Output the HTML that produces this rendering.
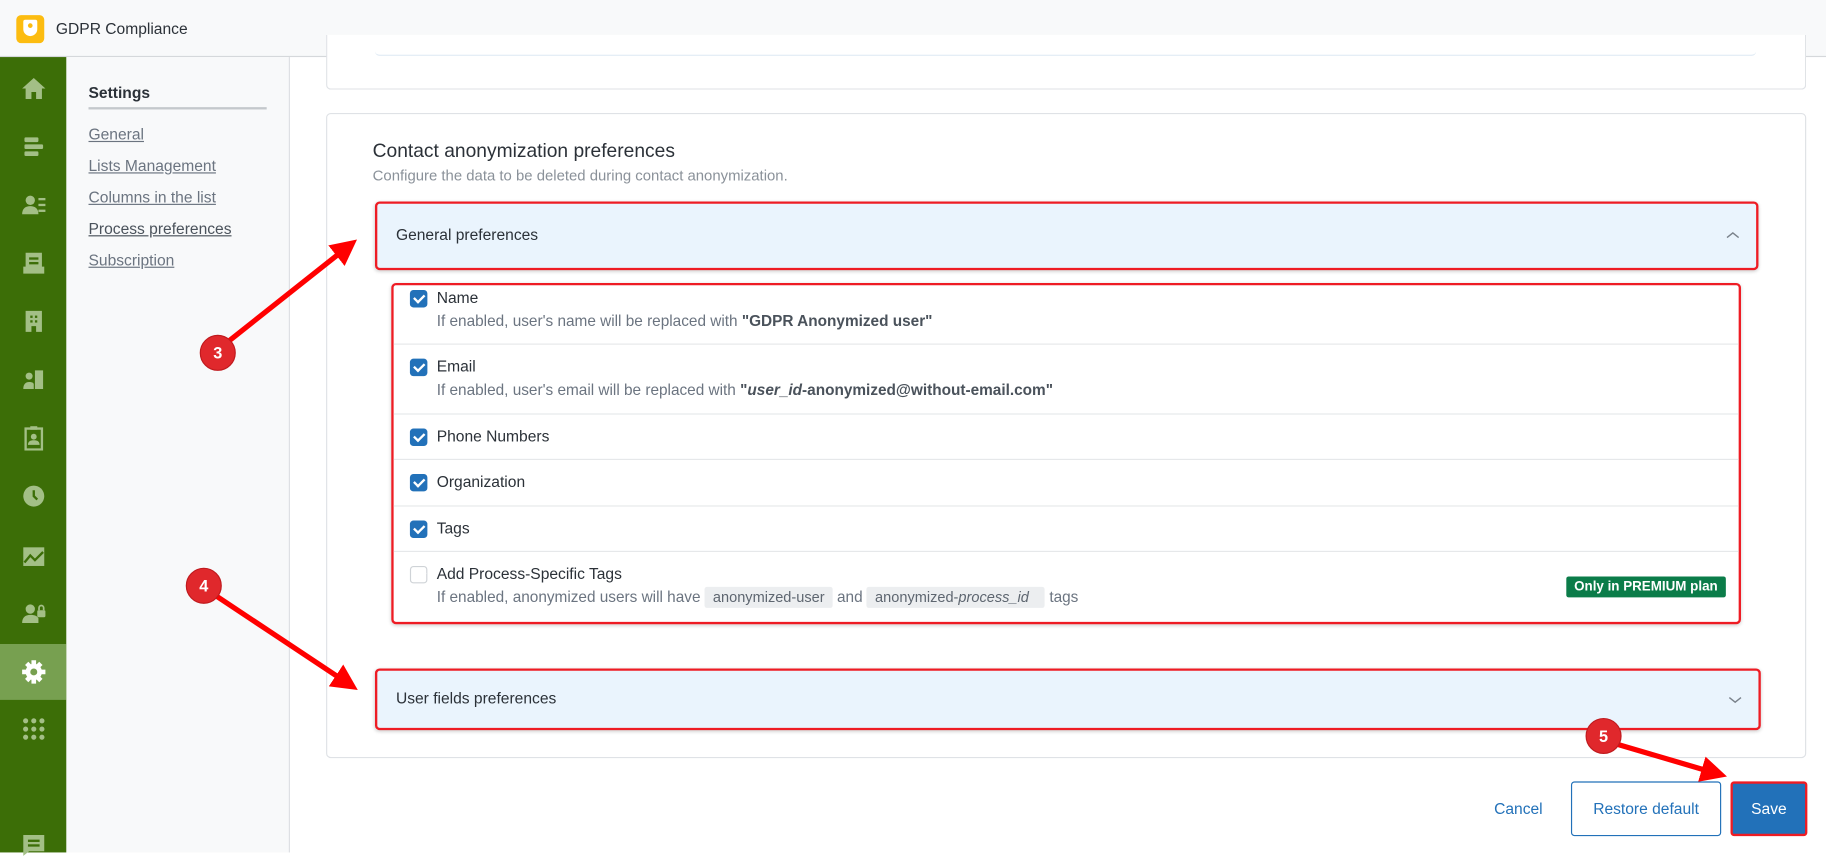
<!DOCTYPE html>
<html><head><meta charset="utf-8"><style>
*{box-sizing:border-box;margin:0;padding:0}
html,body{width:1826px;height:852px;overflow:hidden;background:#fff;font-family:"Liberation Sans",sans-serif}
#w{position:absolute;left:0;top:0;width:1568px;height:732px;transform:scale(1.16454);transform-origin:0 0;background:#fff}
.abs{position:absolute}
#top{left:0;top:0;width:1568px;height:49px;background:#f8f9fa;border-bottom:1px solid #d5d8db}
#side{left:0;top:49px;width:57px;height:683px;background:#3c6e07}
#nav{left:57px;top:49px;width:192px;height:683px;background:#f8f9fa;border-right:1px solid #dde0e3}
.nl{position:absolute;left:19px;font-size:13.4px;color:#6b7480;text-decoration:underline}
.card{border:1px solid #dfe2e6;border-radius:4px;background:#fff}
.hdr{background:#eaf4fd;border:2px solid #ee1c24;border-radius:4px;box-shadow:0 1px 3px rgba(0,0,0,.2);font-size:13.4px;color:#2b3138}
.row{position:absolute;left:0;right:0;border-bottom:1px solid #e6e8ea}
.cb{position:absolute;left:14px;width:15px;height:15px;border-radius:3px;background:#2271b9}
.cb:after{content:"";position:absolute;left:5px;top:2px;width:4px;height:7px;border:solid #fff;border-width:0 2px 2px 0;transform:rotate(45deg)}
.lb{position:absolute;left:37px;font-size:13.4px;color:#2b3138}
.ds{position:absolute;left:37px;font-size:13.2px;color:#6b7480}
.ds b{color:#4a525b}
.tg{background:#eceef0;padding:2px 7px;font-size:12.5px;color:#5e6670;border-radius:2px}
.ic{position:absolute;left:18px;width:22px;height:22px;fill:#a3bf86}
</style></head><body><div id="w">
<div id="top" class="abs">
<div class="abs" style="left:14px;top:13px;width:24px;height:24px;background:#fcbc10;border-radius:4px"></div>
<div class="abs" style="left:20px;top:17px;width:12px;height:14px;background:#fff;border-radius:2px 2px 7px 7px"></div>
<div class="abs" style="left:24px;top:20px;width:4px;height:4px;background:#fcbc10;border-radius:50%"></div>
<div class="abs" style="left:48px;top:17px;font-size:13.4px;color:#2b3138">GDPR Compliance</div>
</div>
<div id="side" class="abs">
<svg class="ic" style="top:16px" viewBox="0 0 22 22"><path d="M11 2 1 11h3v9h5v-6h4v6h5v-9h3z"/></svg>
<svg class="ic" style="top:66px" viewBox="0 0 22 22"><rect x="3" y="3" width="12" height="4" rx="1"/><rect x="3" y="9" width="16" height="4" rx="1"/><rect x="3" y="15" width="12" height="4" rx="1"/></svg>
<svg class="ic" style="top:116px" viewBox="0 0 22 22"><circle cx="8" cy="7" r="4"/><path d="M1 19c0-5 3-7 7-7s7 2 7 7z"/><rect x="15" y="5" width="6" height="2"/><rect x="15" y="10" width="6" height="2"/><rect x="15" y="15" width="6" height="2"/></svg>
<svg class="ic" style="top:166px" viewBox="0 0 22 22"><path d="M4 2h14v12H4zM2 14h18v6H2z"/><rect x="7" y="6" width="8" height="2" fill="#3c6e07"/><rect x="7" y="10" width="8" height="2" fill="#3c6e07"/></svg>
<svg class="ic" style="top:216px" viewBox="0 0 22 22"><path d="M4 2h14v18h-5v-5h-4v5H4z"/><rect x="8" y="6" width="2" height="2" fill="#3c6e07"/><rect x="12" y="6" width="2" height="2" fill="#3c6e07"/><rect x="8" y="10" width="2" height="2" fill="#3c6e07"/><rect x="12" y="10" width="2" height="2" fill="#3c6e07"/></svg>
<svg class="ic" style="top:266px" viewBox="0 0 22 22"><circle cx="7" cy="8" r="3"/><path d="M2 19c0-4 2-6 5-6s4 1 4 2v4z M12 3h7v16h-7z"/></svg>
<svg class="ic" style="top:316px" viewBox="0 0 22 22"><path d="M4 3h14v18H4z" fill="none" stroke="#a3bf86" stroke-width="2"/><rect x="8" y="1" width="6" height="3"/><circle cx="11" cy="10" r="2.5"/><path d="M6 17c0-3 2-4 5-4s5 1 5 4z"/></svg>
<svg class="ic" style="top:366px" viewBox="0 0 22 22"><circle cx="11" cy="11" r="9"/><path d="M11 6v5l3 3" stroke="#3c6e07" stroke-width="2" fill="none"/></svg>
<svg class="ic" style="top:418px" viewBox="0 0 22 22"><rect x="2" y="3" width="18" height="16"/><path d="M3 16l5-6 4 4 7-7" stroke="#3c6e07" stroke-width="2" fill="none"/></svg>
<svg class="ic" style="top:466px" viewBox="0 0 22 22"><circle cx="8" cy="8" r="4"/><path d="M1 20c0-5 3-7 7-7s6 1 7 3v4z"/><rect x="14" y="9" width="7" height="6" rx="1"/><path d="M15.5 9V7a2 2 0 0 1 4 0v2" fill="none" stroke="#a3bf86" stroke-width="1.5"/></svg>
<div class="abs" style="left:0;top:504px;width:57px;height:48px;background:#77a050"></div>
<svg class="ic" style="top:517px;fill:#fff" viewBox="0 0 22 22"><circle cx="11" cy="11" r="7"/><circle cx="11" cy="11" r="3" fill="#77a050"/><path d="M9 1h4v4H9zM9 17h4v4H9zM1 9h4v4H1zM17 9h4v4h-4zM3.5 5l2.8-2.8 2.8 2.8-2.8 2.8zM12.9 17l2.8-2.8 2.8 2.8-2.8 2.8zM3.5 17l2.8-2.8 2.8 2.8-2.8 2.8zM12.9 5l2.8-2.8 2.8 2.8-2.8 2.8z"/></svg>
<svg class="ic" style="top:566px" viewBox="0 0 22 22"><circle cx="4" cy="4" r="2.2"/><circle cx="11" cy="4" r="2.2"/><circle cx="18" cy="4" r="2.2"/><circle cx="4" cy="11" r="2.2"/><circle cx="11" cy="11" r="2.2"/><circle cx="18" cy="11" r="2.2"/><circle cx="4" cy="18" r="2.2"/><circle cx="11" cy="18" r="2.2"/><circle cx="18" cy="18" r="2.2"/></svg>
<svg class="ic" style="top:666px" viewBox="0 0 22 22"><path d="M2 2h18v14H7l-5 4z"/><rect x="6" y="6" width="10" height="2" fill="#3c6e07"/><rect x="6" y="10" width="10" height="2" fill="#3c6e07"/></svg>
</div>
<div id="nav" class="abs">
<div class="abs" style="left:19px;top:23px;font-size:13.4px;font-weight:bold;color:#2b3138">Settings</div>
<div class="abs" style="left:19px;top:43px;width:153px;height:2px;background:#c4c8cc"></div>
<div class="nl" style="top:59px">General</div>
<div class="nl" style="top:86px">Lists Management</div>
<div class="nl" style="top:113px">Columns in the list</div>
<div class="nl" style="top:140px;color:#4a525b">Process preferences</div>
<div class="nl" style="top:167px">Subscription</div>
</div>
<div class="abs card" style="left:280px;top:30px;width:1271px;height:47px;border-top:none;border-radius:0 0 4px 4px"></div>
<div class="abs" style="left:322px;top:30px;width:1186px;height:18px;border-bottom:1px solid #dbe7f2;border-radius:0 0 4px 4px"></div>
<div class="abs card" style="left:280px;top:97px;width:1271px;height:554px">
<div class="abs" style="left:39px;top:23px;font-size:16.5px;color:#2b3138">Contact anonymization preferences</div>
<div class="abs" style="left:39px;top:45px;font-size:12.8px;color:#8a9199">Configure the data to be deleted during contact anonymization.</div>
<div class="abs hdr" style="left:41px;top:75px;width:1188px;height:59px"><span class="abs" style="left:16px;top:19px">General preferences</span>
<svg class="abs" style="right:14px;top:23px" width="12" height="8" viewBox="0 0 12 8"><path d="M1 6l5-4 5 4" fill="none" stroke="#7a828b" stroke-width="1.2"/></svg></div>
<div class="abs" style="left:55px;top:145px;width:1159px;height:293px;border:2px solid #ee1c24;border-radius:4px;box-shadow:0 1px 3px rgba(0,0,0,.2)">
<div class="row" style="top:0;height:51px"><div class="cb" style="top:4px"></div><div class="lb" style="top:3px">Name</div><div class="ds" style="top:23px">If enabled, user's name will be replaced with <b>"GDPR Anonymized user"</b></div></div>
<div class="row" style="top:51px;height:60px"><div class="cb" style="top:12px"></div><div class="lb" style="top:11px">Email</div><div class="ds" style="top:31px">If enabled, user's email will be replaced with <b>"<i>user_id</i>-anonymized@without-email.com"</b></div></div>
<div class="row" style="top:111px;height:39px"><div class="cb" style="top:12px"></div><div class="lb" style="top:11px">Phone Numbers</div></div>
<div class="row" style="top:150px;height:40px"><div class="cb" style="top:12px"></div><div class="lb" style="top:11px">Organization</div></div>
<div class="row" style="top:190px;height:39px"><div class="cb" style="top:12px"></div><div class="lb" style="top:11px">Tags</div></div>
<div class="row" style="top:229px;height:60px;border:none"><div class="cb" style="top:12px;background:#fff;border:1px solid #cfd3d7"></div><div class="lb" style="top:11px">Add Process-Specific Tags</div><div class="ds" style="top:31px">If enabled, anonymized users will have <span class="tg">anonymized-user</span> and <span class="tg">anonymized-<i>process_id</i>&nbsp;&nbsp;</span> tags</div>
<div class="abs" style="right:11px;top:21px;background:#0b7c49;color:#fff;font-size:11.5px;font-weight:bold;padding:3px 7px;border-radius:2px">Only in PREMIUM plan</div></div>
</div>
<div class="abs hdr" style="left:41px;top:476px;width:1190px;height:53px"><span class="abs" style="left:16px;top:16px">User fields preferences</span>
<svg class="abs" style="right:14px;top:21px" width="12" height="8" viewBox="0 0 12 8"><path d="M1 2l5 4 5-4" fill="none" stroke="#7a828b" stroke-width="1.2"/></svg></div>
</div>
<div class="abs" style="left:1283px;top:687px;font-size:13.4px;color:#2271b9">Cancel</div>
<div class="abs" style="left:1349px;top:671px;width:129px;height:47px;border:1px solid #2271b9;border-radius:3px;font-size:13.4px;color:#2271b9;text-align:center;line-height:45px">Restore default</div>
<div class="abs" style="left:1486px;top:671px;width:66px;height:47px;background:#2271b9;border:2px solid #ee1c24;border-radius:3px;font-size:13.4px;color:#fff;text-align:center;line-height:43px">Save</div>
<svg class="abs" style="left:0;top:0" width="1568" height="732">
<defs><marker id="a" markerWidth="5" markerHeight="5" refX="2" refY="2.5" orient="auto" markerUnits="strokeWidth"><path d="M0 0L5 2.5 0 5z" fill="#f00"/></marker></defs>
<g stroke="#f00" stroke-width="4.5" stroke-linecap="round">
<line x1="190" y1="298" x2="296" y2="214" marker-end="url(#a)"/>
<line x1="180" y1="508" x2="296" y2="585" marker-end="url(#a)"/>
<line x1="1385" y1="638" x2="1470" y2="663" marker-end="url(#a)"/>
</g>
<g fill="#e0282c" stroke="#c01a1e" stroke-width="1"><circle cx="187" cy="303" r="15"/><circle cx="175" cy="503" r="15"/><circle cx="1377" cy="632" r="15"/></g>
<g fill="#fff" font-size="14" font-weight="bold" font-family="Liberation Sans" text-anchor="middle"><text x="187" y="308">3</text><text x="175" y="508">4</text><text x="1377" y="637">5</text></g>
</svg>
</div></body></html>
